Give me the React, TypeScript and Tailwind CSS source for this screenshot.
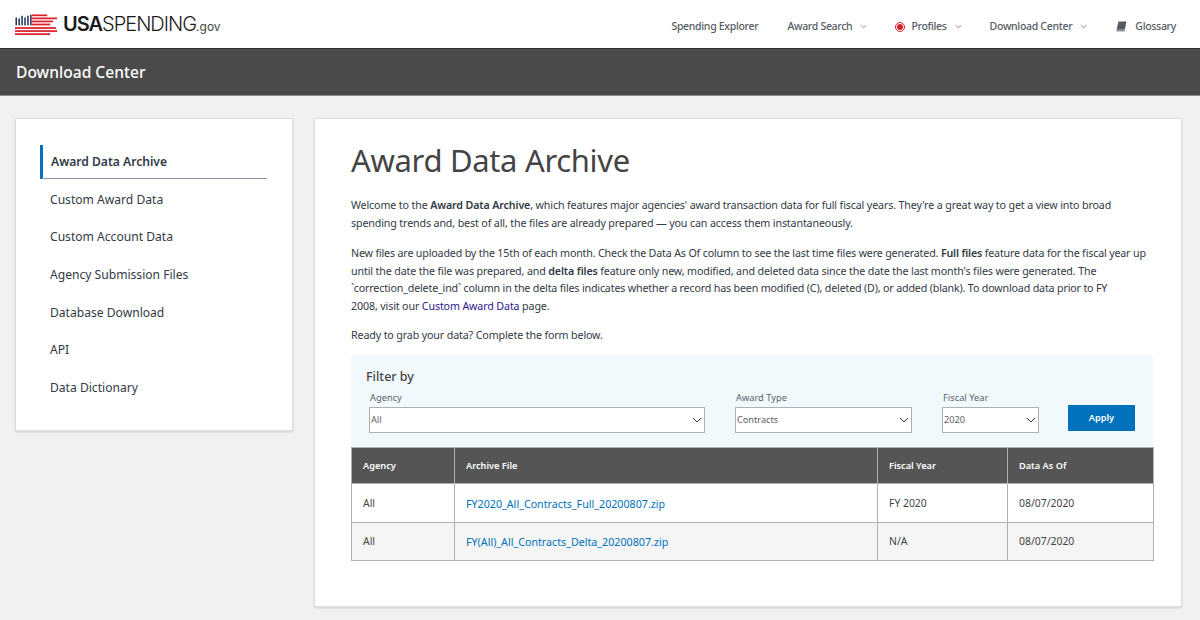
const F = "[font-family:'Noto_Sans','Liberation_Sans',sans-serif]";

function Chevron({ className = "" }: { className?: string }) {
  return (
    <svg viewBox="0 0 10 6" className={className} fill="none" stroke="currentColor" strokeWidth="1">
      <path d="M1 1l4 4 4-4" />
    </svg>
  );
}

function Logo() {
  return (
    <svg width="42" height="21" viewBox="0 0 43 24" preserveAspectRatio="none" className="shrink-0">
      <g fill="#1a2a5c">
        <rect x="0.5" y="4" width="1.5" height="9" />
        <rect x="3.5" y="5" width="1.5" height="8" />
        <rect x="6.5" y="2" width="1.5" height="11" />
        <rect x="9.5" y="4" width="1.5" height="9" />
        <rect x="12.5" y="2" width="1.5" height="11" />
        <rect x="15.5" y="1" width="1.5" height="12" />
      </g>
      <g fill="#e0202c">
        <rect x="17" y="0.5" width="16" height="2" />
        <rect x="17" y="4" width="26" height="2" />
        <rect x="17" y="7.5" width="22" height="2" />
        <rect x="17" y="11" width="19" height="2" />
        <rect x="0" y="15" width="42" height="2" />
        <rect x="0" y="18.5" width="43" height="2" />
        <rect x="0" y="22" width="36" height="2" />
      </g>
    </svg>
  );
}

function Select({ value, w, label }: { value: string; w: string; label: string }) {
  return (
    <div className={`flex flex-col ${w}`}>
      <span className="text-[9.3px] leading-[14px] text-[#5b616b] mb-[2px] pl-px">{label}</span>
      <div className="h-[26px] bg-white border border-[#aeb0b5] flex items-center justify-between pl-px pr-[1px] text-[9.2px] text-[#5b616b]">
        <span>{value}</span>
        <Chevron className="w-[10px] h-[6px] text-[#323a45] mr-px" />
      </div>
    </div>
  );
}

const nav = ["Custom Award Data", "Custom Account Data", "Agency Submission Files", "Database Download", "API", "Data Dictionary"];

export default function App() {
  return (
    <div className={`${F} w-[1200px] h-[620px] overflow-hidden bg-[#f1f1f1] text-[#323a45]`}>
      <header className="h-[48px] bg-white flex items-center justify-between pl-[15px] pr-[24px]">
        <div className="flex items-center">
          <Logo />
          <span className="ml-[6px] text-[20px] tracking-[-1px] text-[#1a1a1a] font-['Inter',sans-serif] flex items-baseline">
            <b className="font-semibold">USA</b>
            <span className="font-light">SPENDING</span>
            <span className="text-[12px] tracking-normal text-[#444] font-normal">.gov</span>
          </span>
        </div>
        <nav className="mt-[5px] flex items-center text-[10.5px] tracking-[-0.3px] font-medium text-[#555b64]">
          <span>Spending Explorer</span>
          <span className="ml-[29px]">Award Search</span>
          <Chevron className="w-[7px] h-[5px] ml-[8px]" />
          <span className="ml-[28px] w-[10px] h-[10px] rounded-full border border-[#d5202c] flex items-center justify-center">
            <span className="w-[6px] h-[6px] rounded-full bg-[#d5202c]" />
          </span>
          <span className="ml-[6px]">Profiles</span>
          <Chevron className="w-[7px] h-[5px] ml-[8px]" />
          <span className="ml-[28px]">Download Center</span>
          <Chevron className="w-[7px] h-[5px] ml-[8px]" />
          <svg viewBox="0 0 10 10" className="ml-[29px] w-[11px] h-[11px]" fill="#555b64">
            <path d="M2.2 0.5H9.5L8 8H0.5z" />
            <path d="M0.5 8.2H8V9.5H0.5z" fill="#8a8f96" />
          </svg>
          <span className="ml-[8px]">Glossary</span>
        </nav>
      </header>

      <div className="h-[48px] bg-[#4a4a4a] border-t border-[#2f2f2f] border-b border-b-[#8d8d8d] flex items-center pl-[16px] pt-px text-white text-[15.6px] font-medium">
        Download Center
      </div>

      <div className="flex items-start gap-[21px] pl-[15px] pt-[22px]">
        <aside className="w-[278px] h-[313px] bg-white border border-[#dddddd] shadow-[0_1px_2px_rgba(0,0,0,0.15)] pl-[24px] pt-[26px] shrink-0">
          <div className="w-[227px] h-[34px] border-l-[3px] border-l-[#0071bc] border-b border-b-[#8a94a3] flex items-center pl-[8px] pt-px text-[12.1px] font-semibold text-[#323a45]">
            Award Data Archive
          </div>
          <ul className="flex flex-col pl-[10px]">
            {nav.map((n) => (
              <li key={n} className="h-[37.6px] flex items-center text-[12.1px] text-[#323a45] first:mt-[2px]">{n}</li>
            ))}
          </ul>
        </aside>

        <main className="w-[868px] h-[489px] bg-white border border-[#dddddd] shadow-[0_1px_2px_rgba(0,0,0,0.15)] pl-[36px] pr-[28px] pt-[19px] shrink-0">
          <h1 className="text-[31px] leading-[44px] text-[#444] font-normal tracking-[-0.33px]">Award Data Archive</h1>
          <div className="text-[10.7px] leading-[17.6px] tracking-[-0.14px] text-[#323a45] mt-[15px]">
            <p>Welcome to the <b className="font-semibold">Award Data Archive</b>, which features major agencies' award transaction data for full fiscal years. They're a great way to get a view into broad<br />spending trends and, best of all, the files are already prepared — you can access them instantaneously.</p>
            <p className="mt-[13px]"><span className="tracking-[-0.17px]">New files are uploaded by the 15th of each month. Check the Data As Of column to see the last time files were generated. <b className="font-semibold">Full files</b> feature data for the fiscal year up</span><br />until the date the file was prepared, and <b className="font-semibold">delta files</b> feature only new, modified, and deleted data since the date the last month's files were generated. The<br /><span className="tracking-[-0.17px]">`correction_delete_ind` column in the delta files indicates whether a record has been modified (C), deleted (D), or added (blank). To download data prior to FY</span><br />2008, visit our <span className="text-[#2e1a8f]">Custom Award Data</span> page.</p>
            <p className="mt-[11px]">Ready to grab your data? Complete the form below.</p>
          </div>

          <div className="mt-[11px] h-[92px] bg-[#f1f9fc] pl-[15px] pt-[13px] flex flex-col">
            <div className="text-[12.5px] leading-[17px] font-medium text-[#444]">Filter by</div>
            <div className="flex items-end mt-[6px] pl-[3px]">
              <Select label="Agency" value="All" w="w-[336px]" />
              <Select label="Award Type" value="Contracts" w="w-[177px] ml-[30px]" />
              <Select label="Fiscal Year" value="2020" w="w-[97px] ml-[30px]" />
              <button className="ml-[29px] mb-[2px] w-[67px] h-[26px] bg-[#0071bc] text-white text-[9.2px] font-semibold">Apply</button>
            </div>
          </div>

          <table className="w-[802px] table-fixed border-collapse text-[10.4px]">
            <colgroup>
              <col className="w-[103px]" />
              <col className="w-[423px]" />
              <col className="w-[130px]" />
              <col className="w-[146px]" />
            </colgroup>
            <thead>
              <tr className="h-[36px] bg-[#555555] text-white text-left text-[9.2px]">
                {["Agency", "Archive File", "Fiscal Year", "Data As Of"].map((h) => (
                  <th key={h} className="border border-[#aeb0b5] pl-[11px] font-semibold">{h}</th>
                ))}
              </tr>
            </thead>
            <tbody className="text-[#444]">
              <tr className="h-[39px] bg-white">
                <td className="border border-[#aeb0b5] pl-[11px] pt-px">All</td>
                <td className="border border-[#aeb0b5] pl-[11px] pt-px text-[#0071bc] text-[10.7px]">FY2020_All_Contracts_Full_20200807.zip</td>
                <td className="border border-[#aeb0b5] pl-[11px] pt-px">FY 2020</td>
                <td className="border border-[#aeb0b5] pl-[11px] pt-px">08/07/2020</td>
              </tr>
              <tr className="h-[38px] bg-[#f5f5f5]">
                <td className="border border-[#aeb0b5] pl-[11px]">All</td>
                <td className="border border-[#aeb0b5] pl-[11px] text-[#0071bc] text-[10.7px]">FY(All)_All_Contracts_Delta_20200807.zip</td>
                <td className="border border-[#aeb0b5] pl-[11px]">N/A</td>
                <td className="border border-[#aeb0b5] pl-[11px]">08/07/2020</td>
              </tr>
            </tbody>
          </table>
        </main>
      </div>
    </div>
  );
}
